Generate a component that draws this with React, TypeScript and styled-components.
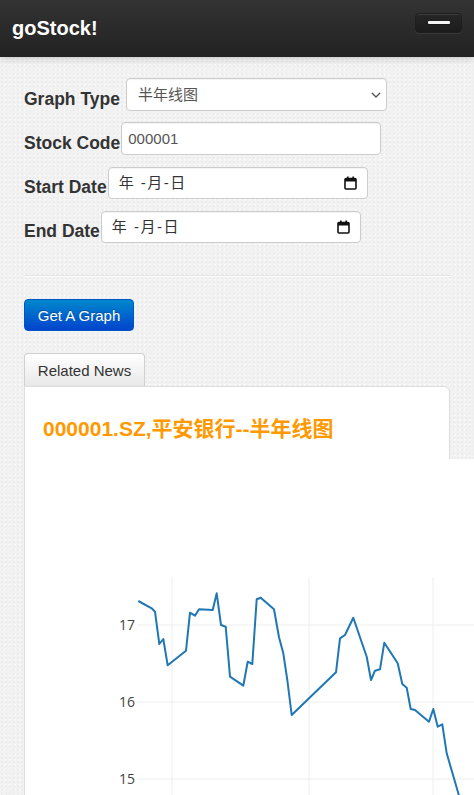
import React from "react";
import styled, { createGlobalStyle } from "styled-components";

const GlobalStyle = createGlobalStyle`
  html, body {
    margin: 0;
    padding: 0;
    overflow-x: hidden;
  }
  body {
    font-family: "Liberation Sans", Arial, "Noto Sans CJK SC", sans-serif;
    color: #333;
    background-color: #f2f2f2;
    background-image:
      radial-gradient(rgba(0, 0, 0, 0.025) 1px, transparent 1px),
      radial-gradient(rgba(255, 255, 255, 0.6) 1px, transparent 1px);
    background-size: 4px 4px, 5px 5px;
    background-position: 0 0, 2px 2px;
  }
`;

const Navbar = styled.div`
  height: 57px;
  background: linear-gradient(to bottom, #333333, #222222);
  box-shadow: 0 1px 8px rgba(0, 0, 0, 0.2);
  display: flex;
  align-items: center;
  justify-content: space-between;
  padding: 0 12px;
`;

const Brand = styled.a`
  color: #fff;
  font-size: 20px;
  font-weight: bold;
  text-decoration: none;
  margin-top: -1px;
`;

const Toggle = styled.button`
  width: 47px;
  height: 20px;
  margin-top: -12px;
  border: 1px solid #1e1e1e;
  border-radius: 4px;
  background: linear-gradient(to bottom, #262626, #1c1c1c);
  box-shadow: inset 0 1px 0 rgba(255, 255, 255, 0.1), 0 1px 0 rgba(255, 255, 255, 0.075);
  display: flex;
  align-items: center;
  justify-content: center;
  padding: 0;
`;

const IconBar = styled.span`
  display: block;
  width: 22px;
  height: 3px;
  border-radius: 1px;
  background: #f5f5f5;
  box-shadow: 0 1px 0 rgba(0, 0, 0, 0.25);
`;

const Main = styled.div`
  padding: 21px 24px 0 24px;
`;

const Form = styled.div`
  display: flex;
  flex-direction: column;
  gap: 11px;
`;

const Row = styled.div`
  display: flex;
  align-items: center;
  height: 33px;
`;

const Label = styled.label`
  font-size: 17.5px;
  font-weight: bold;
  color: #333;
  padding-top: 9px;
`;

const SelectWrap = styled.div<{ $gap: number }>`
  position: relative;
  margin-left: ${(p) => p.$gap}px;
  width: 261px;
  height: 33px;
`;

const Select = styled.select`
  appearance: none;
  width: 100%;
  height: 100%;
  box-sizing: border-box;
  border: 1px solid #ccc;
  border-radius: 4px;
  background: #fff;
  padding: 0 11px;
  font-size: 15px;
  color: #555;
  font-family: "Liberation Sans", "Noto Sans CJK SC", sans-serif;
  box-shadow: inset 0 1px 1px rgba(0, 0, 0, 0.05);
`;

const Chevron = styled.svg`
  position: absolute;
  right: 5px;
  top: 11px;
  pointer-events: none;
`;

const TextInput = styled.input<{ $gap: number }>`
  margin-left: ${(p) => p.$gap}px;
  width: 260px;
  height: 33px;
  box-sizing: border-box;
  border: 1px solid #ccc;
  border-radius: 4px;
  background: #fff;
  padding: 0 6px 1px;
  font-size: 15px;
  color: #555;
  font-family: "Liberation Sans", sans-serif;
  box-shadow: inset 0 1px 1px rgba(0, 0, 0, 0.05);
  outline: none;
`;

const DateField = styled.div<{ $gap: number }>`
  margin-left: ${(p) => p.$gap}px;
  width: 260px;
  height: 32px;
  box-sizing: border-box;
  border: 1px solid #ccc;
  border-radius: 4px;
  background: #fff;
  padding: 0 10px 0 10px;
  display: flex;
  align-items: center;
  justify-content: space-between;
  box-shadow: inset 0 1px 1px rgba(0, 0, 0, 0.05);
`;

const DateText = styled.span`
  font-size: 15px;
  color: #333;
  font-family: "Liberation Sans", "Noto Sans CJK SC", sans-serif;
  letter-spacing: 1.5px;
  margin-top: -2px;
  white-space: pre;
`;

const Divider = styled.hr`
  margin: 32px 0 22px;
  border: 0;
  border-top: 1px solid #e2e2e2;
  border-bottom: 1px solid #fff;
`;

const PrimaryButton = styled.button`
  width: 110px;
  height: 32px;
  border: 1px solid #0055cc;
  border-radius: 4px;
  background: linear-gradient(to bottom, #0088cc, #0044cc);
  color: #fff;
  font-size: 15px;
  font-family: "Liberation Sans", sans-serif;
  padding: 0;
  text-shadow: 0 -1px 0 rgba(0, 0, 0, 0.25);
`;

const TabButton = styled.button`
  margin-top: 22px;
  width: 121px;
  height: 33px;
  border: 1px solid #d0d0d0;
  border-bottom: none;
  border-radius: 4px 4px 0 0;
  background: linear-gradient(to bottom, #ffffff, #e8e8e8);
  color: #333;
  font-size: 15px;
  font-family: "Liberation Sans", sans-serif;
  padding: 0;
  display: block;
`;

const Card = styled.div`
  width: 426px;
  box-sizing: border-box;
  background: #fff;
  border: 1px solid #ddd;
  border-radius: 0 6px 0 0;
  height: 420px;
`;

const Title = styled.h3`
  margin: 0;
  padding: 25px 0 0 18px;
  height: 47px;
  color: #ff9900;
  font-size: 21px;
  font-weight: bold;
  font-family: "Liberation Sans", "Noto Sans CJK SC", sans-serif;
  white-space: nowrap;
`;

const ChartBox = styled.div`
  width: 720px;
  height: 400px;
  background: #fff;
`;

const TickLabel = styled.text`
  font-family: "Open Sans", sans-serif;
  font-size: 14px;
  fill: #444;
`;

const points: [number, number][] = [
  [113.3, 142], [126.7, 149.3], [130, 152.7], [134.3, 185], [138.3, 180],
  [142.7, 206.3], [161, 191.7], [165, 153.7], [170, 156.7], [174, 150.3],
  [187.7, 151], [191.7, 134.3], [196, 166], [200.7, 167.7], [205, 217.7],
  [218.3, 226.7], [222.7, 202.7], [227.3, 205], [231.7, 140.3], [235.7, 138.7],
  [249, 150.3], [254, 178.3], [258.3, 194.3], [262.3, 221], [266.7, 256],
  [311, 213.3], [315, 179.3], [320, 176], [328.3, 158.7], [341.7, 197.7],
  [346, 221], [350, 211.7], [355, 210.3], [359.3, 183.7], [372.7, 204.3],
  [377.3, 225], [381.7, 228.7], [385.7, 250], [390, 251], [404, 262.7],
  [408.3, 250], [412.7, 267.7], [417.3, 265.3], [421.7, 294.3], [433.3, 334.3],
  [440, 360], [446, 372],
];

const ticks = [
  { y: 166, label: "17" },
  { y: 243, label: "16" },
  { y: 320, label: "15" },
];

const vGrid = [147, 284, 408];

const Chart = () => (
  <ChartBox>
    <svg width="720" height="400" viewBox="0 0 720 400">
      {vGrid.map((x) => (
        <line key={x} x1={x} y1={118} x2={x} y2={400} stroke="#eeeeee" strokeWidth="1" />
      ))}
      {ticks.map((t) => (
        <g key={t.label}>
          <line x1={112} y1={t.y} x2={720} y2={t.y} stroke="#eeeeee" strokeWidth="1" />
          <TickLabel x={110} y={t.y + 5} textAnchor="end">
            {t.label}
          </TickLabel>
        </g>
      ))}
      <polyline
        points={points.map((p) => p.join(",")).join(" ")}
        fill="none"
        stroke="#1f77b4"
        strokeWidth="2"
        strokeLinejoin="round"
      />
    </svg>
  </ChartBox>
);

const CalendarIcon = () => (
  <svg width="13" height="14" viewBox="0 0 13 14">
    <rect x="1" y="2.5" width="11" height="10.5" rx="1" fill="none" stroke="#111" strokeWidth="1.6" />
    <rect x="1" y="2.5" width="11" height="3" fill="#111" />
    <rect x="3" y="0.5" width="1.6" height="3" fill="#111" />
    <rect x="8.4" y="0.5" width="1.6" height="3" fill="#111" />
  </svg>
);

export default function App() {
  return (
    <>
      <GlobalStyle />
      <Navbar>
        <Brand href="#">goStock!</Brand>
        <Toggle>
          <IconBar />
        </Toggle>
      </Navbar>
      <Main>
        <Form>
          <Row>
            <Label>Graph Type</Label>
            <SelectWrap $gap={6}>
              <Select defaultValue="half">
                <option value="half">半年线图</option>
              </Select>
              <Chevron width="12" height="12" viewBox="0 0 12 12">
                <path d="M2 4 L6 8 L10 4" fill="none" stroke="#555" strokeWidth="1.4" />
              </Chevron>
            </SelectWrap>
          </Row>
          <Row>
            <Label>Stock Code</Label>
            <TextInput $gap={1} defaultValue="000001" />
          </Row>
          <Row>
            <Label>Start Date</Label>
            <DateField $gap={1}>
              <DateText>年 -月-日</DateText>
              <CalendarIcon />
            </DateField>
          </Row>
          <Row>
            <Label>End Date</Label>
            <DateField $gap={1}>
              <DateText>年 -月-日</DateText>
              <CalendarIcon />
            </DateField>
          </Row>
        </Form>
        <Divider />
        <PrimaryButton>Get A Graph</PrimaryButton>
        <TabButton>Related News</TabButton>
        <Card>
          <Title>000001.SZ,平安银行--半年线图</Title>
          <Chart />
        </Card>
      </Main>
    </>
  );
}
